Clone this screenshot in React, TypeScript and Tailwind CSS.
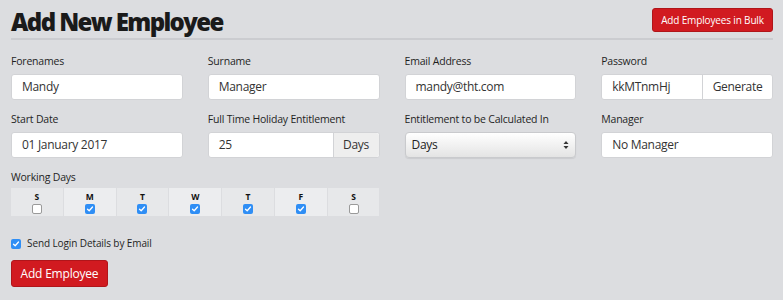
import React from "react";

const font = { fontFamily: '"Open Sans", "Liberation Sans", sans-serif' };

function Check({ checked }: { checked: boolean }) {
  if (checked) {
    return (
      <span className="inline-flex h-[10px] w-[10px] items-center justify-center rounded-[2px] bg-[#2f8ef5]">
        <svg width="8" height="8" viewBox="0 0 8 8">
          <path d="M1.5 4.2 L3.2 5.8 L6.5 2" stroke="white" strokeWidth="1.3" fill="none" strokeLinecap="round" strokeLinejoin="round" />
        </svg>
      </span>
    );
  }
  return <span className="inline-block h-[10px] w-[10px] rounded-[2px] border border-[#9a9a9a] bg-white" />;
}

function Label({ children }: { children: React.ReactNode }) {
  return <div className="h-[15px] text-[10.5px] leading-[15px] tracking-[-0.2px] text-[#1f1f1f]">{children}</div>;
}

function Input({ value }: { value: string }) {
  return (
    <div className="mt-[5px] flex h-[26px] items-center rounded-[3px] border border-[#d2d3d6] bg-white pl-[10px] text-[12px] tracking-[-0.3px] text-[#333]">
      {value}
    </div>
  );
}

export default function App() {
  const days = [
    { d: "S", c: false },
    { d: "M", c: true },
    { d: "T", c: true },
    { d: "W", c: true },
    { d: "T", c: true },
    { d: "F", c: true },
    { d: "S", c: false },
  ];
  return (
    <div className="h-[300px] w-[783px] overflow-hidden bg-[#dcdde0] pl-[11px] pr-[10px]" style={font}>
      <div className="flex items-start justify-between pt-[7px]">
        <h1 className="text-[24px] font-extrabold leading-[30px] tracking-[-1.6px] text-[#1a1a1a]">Add New Employee</h1>
        <button className="mt-[1px] h-[24px] w-[121px] rounded-[3px] border border-[#b0151a] bg-[#d11a20] text-[10px] tracking-[-0.15px] text-white">
          Add Employees in Bulk
        </button>
      </div>
      <div className="mt-[1px] h-[2px] bg-[#cbccd0]" />
      <div className="mt-[14px] grid grid-cols-4 gap-x-[25px] gap-y-[12px]">
        <div>
          <Label>Forenames</Label>
          <Input value="Mandy" />
        </div>
        <div>
          <Label>Surname</Label>
          <Input value="Manager" />
        </div>
        <div>
          <Label>Email Address</Label>
          <Input value="mandy@tht.com" />
        </div>
        <div>
          <Label>Password</Label>
          <div className="mt-[5px] flex h-[26px] rounded-[3px] border border-[#d2d3d6] bg-white text-[12px] tracking-[-0.3px] text-[#333]">
            <div className="flex flex-1 items-center pl-[10px]">kkMTnmHj</div>
            <div className="flex w-[70px] items-center justify-center border-l border-[#d2d3d6]">Generate</div>
          </div>
        </div>
        <div>
          <Label>Start Date</Label>
          <Input value="01 January 2017" />
        </div>
        <div>
          <Label>Full Time Holiday Entitlement</Label>
          <div className="mt-[5px] flex h-[26px] rounded-[3px] border border-[#d2d3d6] bg-white text-[12px] tracking-[-0.3px] text-[#333]">
            <div className="flex flex-1 items-center pl-[10px]">25</div>
            <div className="flex w-[46px] items-center justify-center rounded-r-[3px] border-l border-[#d2d3d6] bg-[#eeeeee]">Days</div>
          </div>
        </div>
        <div>
          <Label>Entitlement to be Calculated In</Label>
          <div className="mt-[5px] flex h-[26px] items-center justify-between rounded-[4px] border border-[#c9cacd] bg-gradient-to-b from-white to-[#e4e4e4] pl-[6px] pr-[6px] text-[12px] tracking-[-0.3px] text-[#222] shadow-[0_1px_1px_rgba(0,0,0,0.08)]">
            <span>Days</span>
            <svg width="6" height="10" viewBox="0 0 6 10">
              <path d="M0.5 4 L3 1 L5.5 4 Z" fill="#333" />
              <path d="M0.5 6 L3 9 L5.5 6 Z" fill="#333" />
            </svg>
          </div>
        </div>
        <div>
          <Label>Manager</Label>
          <Input value="No Manager" />
        </div>
        <div className="col-span-2">
          <Label>Working Days</Label>
          <div className="mt-[3px] grid h-[28px] grid-cols-7 gap-x-[1px]">
            {days.map((x, i) => (
              <div
                key={i}
                className={`flex flex-col items-center pt-[4px] ${i % 2 === 0 ? "bg-[#e7e8ea]" : "bg-[#ecedef]"}`}
              >
                <div className="text-[8.5px] font-bold leading-[9px] text-[#111]">{x.d}</div>
                <div className="mt-[3px] flex">
                  <Check checked={x.c} />
                </div>
              </div>
            ))}
          </div>
        </div>
      </div>
      <div className="mt-[20px] flex items-center gap-[6px] text-[10px] leading-[15px] tracking-[-0.1px] text-[#1f1f1f]">
        <Check checked={true} />
        <span>Send Login Details by Email</span>
      </div>
      <button className="mt-[9px] h-[27px] w-[97px] rounded-[3px] border border-[#b0151a] bg-[#d11a20] text-[12px] tracking-[-0.2px] text-white">
        Add Employee
      </button>
    </div>
  );
}
